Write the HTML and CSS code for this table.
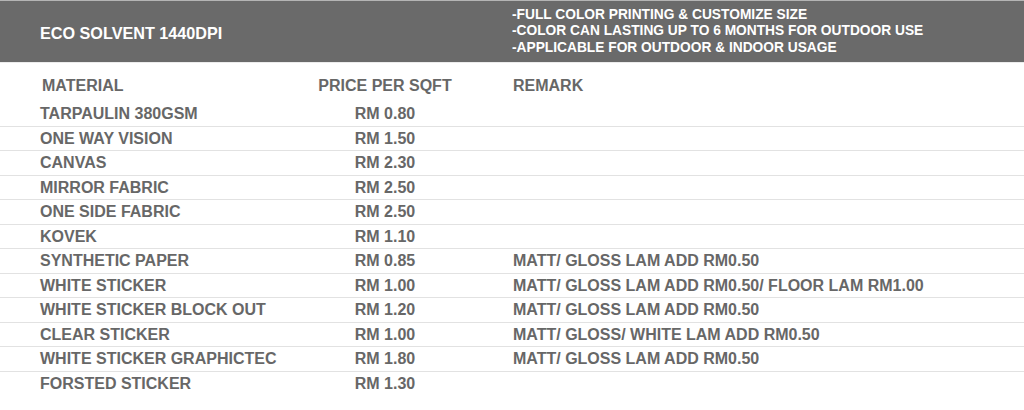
FILE: index.html
```html
<!DOCTYPE html>
<html>
<head>
<meta charset="utf-8">
<link rel="stylesheet" href="styles.css">
</head>
<body>
<div class="sheet">
  <div class="band">
    <div class="band-title">ECO SOLVENT 1440DPI</div>
    <div class="band-notes">
      <div>-FULL COLOR PRINTING &amp; CUSTOMIZE SIZE</div>
      <div>-COLOR CAN LASTING UP TO 6 MONTHS FOR OUTDOOR USE</div>
      <div>-APPLICABLE FOR OUTDOOR &amp; INDOOR USAGE</div>
    </div>
  </div>
  <div class="row head">
    <div class="c-mat">MATERIAL</div>
    <div class="c-price">PRICE PER SQFT</div>
    <div class="c-rem">REMARK</div>
  </div>
  <div class="rows">
    <div class="row"><div class="c-mat">TARPAULIN 380GSM</div><div class="c-price">RM 0.80</div><div class="c-rem"></div></div>
    <div class="row"><div class="c-mat">ONE WAY VISION</div><div class="c-price">RM 1.50</div><div class="c-rem"></div></div>
    <div class="row"><div class="c-mat">CANVAS</div><div class="c-price">RM 2.30</div><div class="c-rem"></div></div>
    <div class="row"><div class="c-mat">MIRROR FABRIC</div><div class="c-price">RM 2.50</div><div class="c-rem"></div></div>
    <div class="row"><div class="c-mat">ONE SIDE FABRIC</div><div class="c-price">RM 2.50</div><div class="c-rem"></div></div>
    <div class="row"><div class="c-mat">KOVEK</div><div class="c-price">RM 1.10</div><div class="c-rem"></div></div>
    <div class="row"><div class="c-mat">SYNTHETIC PAPER</div><div class="c-price">RM 0.85</div><div class="c-rem">MATT/ GLOSS LAM ADD RM0.50</div></div>
    <div class="row"><div class="c-mat">WHITE STICKER</div><div class="c-price">RM 1.00</div><div class="c-rem">MATT/ GLOSS LAM ADD RM0.50/ FLOOR LAM RM1.00</div></div>
    <div class="row"><div class="c-mat">WHITE STICKER BLOCK OUT</div><div class="c-price">RM 1.20</div><div class="c-rem">MATT/ GLOSS LAM ADD RM0.50</div></div>
    <div class="row"><div class="c-mat">CLEAR STICKER</div><div class="c-price">RM 1.00</div><div class="c-rem">MATT/ GLOSS/ WHITE LAM ADD RM0.50</div></div>
    <div class="row"><div class="c-mat">WHITE STICKER GRAPHICTEC</div><div class="c-price">RM 1.80</div><div class="c-rem">MATT/ GLOSS LAM ADD RM0.50</div></div>
    <div class="row"><div class="c-mat">FORSTED STICKER</div><div class="c-price">RM 1.30</div><div class="c-rem"></div></div>
  </div>
</div>
</body>
</html>
```

FILE: styles.css
```css
html, body {
  margin: 0;
  padding: 0;
  background: #ffffff;
}
.sheet {
  width: 1024px;
  font-family: "Liberation Sans", Arial, sans-serif;
  font-weight: bold;
  color: #676767;
  padding-top: 1px;
}
.band {
  background: #6a6a6a;
  height: 61px;
  display: grid;
  grid-template-columns: 512px 1fr;
  align-items: center;
  color: #ffffff;
  border-bottom: 1px solid #ececec;
  box-shadow: 0 -1px 0 #b4b4b4;
}
.band-title {
  font-size: 16.2px;
  padding-left: 40px;
  line-height: 18px;
  padding-top: 2px;
}
.band-notes {
  font-size: 13.75px;
  line-height: 16.5px;
}
.row {
  display: grid;
  grid-template-columns: 290px 190px 1fr;
  font-size: 16px;
  height: 23.5px;
  line-height: 23.5px;
  border-bottom: 1px solid #e2e2e2;
  white-space: nowrap;
}
.row.head {
  height: 39px;
  line-height: 16px;
  padding-top: 15px;
  box-sizing: border-box;
  border-bottom: 0;
}
.rows .row:last-child {
  border-bottom: 0;
}
.c-mat {
  padding-left: 40px;
}
.head .c-mat {
  padding-left: 42px;
}
.c-price {
  text-align: center;
}
.c-rem {
  padding-left: 33px;
}
```
